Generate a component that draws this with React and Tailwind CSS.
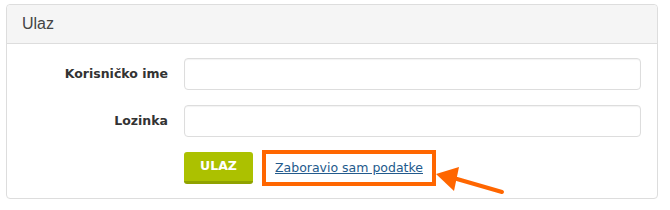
import React from 'react';

const Field = ({ label, type = 'text' }) => (
    <div className="flex items-center">
        <label className="w-[162px] pr-[16px] text-right text-[12.5px] font-bold text-[#333]">
            {label}
        </label>
        <input
            type={type}
            className="h-[32px] w-[457px] rounded-[4px] border border-[#ddd] bg-white shadow-[inset_0_1px_1px_rgba(0,0,0,0.05)]"
        />
    </div>
);

export default function App() {
    return (
        <div className="h-[210px] w-[670px] bg-white pl-[6px] pt-[4px] font-['DejaVu_Sans',Verdana,sans-serif]">
            <div className="relative w-[652px] rounded-[4px] border border-[#ddd] bg-white">
                {/* Heading */}
                <div className="flex h-[39px] items-center rounded-t-[4px] border-b border-[#ddd] bg-[#f5f5f5] pl-[15px] font-['Liberation_Sans',Arial,sans-serif] text-[16px] text-[#444]">
                    Ulaz
                </div>

                {/* Body */}
                <div className="flex flex-col pt-[14px] pb-[12px] pl-[15px]">
                    <Field label="Korisničko ime" />
                    <div className="mt-[15px]">
                        <Field label="Lozinka" type="password" />
                    </div>
                    <div className="mt-[13px] flex items-center pl-[162px]">
                        <button className="h-[32px] w-[69px] rounded-[3px] border-b-[3px] border-[#8fa200] bg-[#acc100] text-[12.5px] font-bold text-white">
                            ULAZ
                        </button>
                        <div className="ml-[9px] flex h-[36px] w-[174px] items-center justify-center border-[4px] border-[#ff6600]">
                            <a href="#" className="text-[12.5px] text-[#235a8c] underline">
                                Zaboravio sam podatke
                            </a>
                        </div>
                    </div>
                </div>

                {/* Annotation arrow */}
                <svg className="absolute left-[428px] top-[153px]" width="80" height="40" viewBox="0 0 80 40">
                    <line x1="22" y1="21" x2="67" y2="34" stroke="#ff6600" strokeWidth="4" strokeLinecap="round" />
                    <polygon points="1,16 24,9 19,33" fill="#ff6600" />
                </svg>
            </div>
        </div>
    );
}
